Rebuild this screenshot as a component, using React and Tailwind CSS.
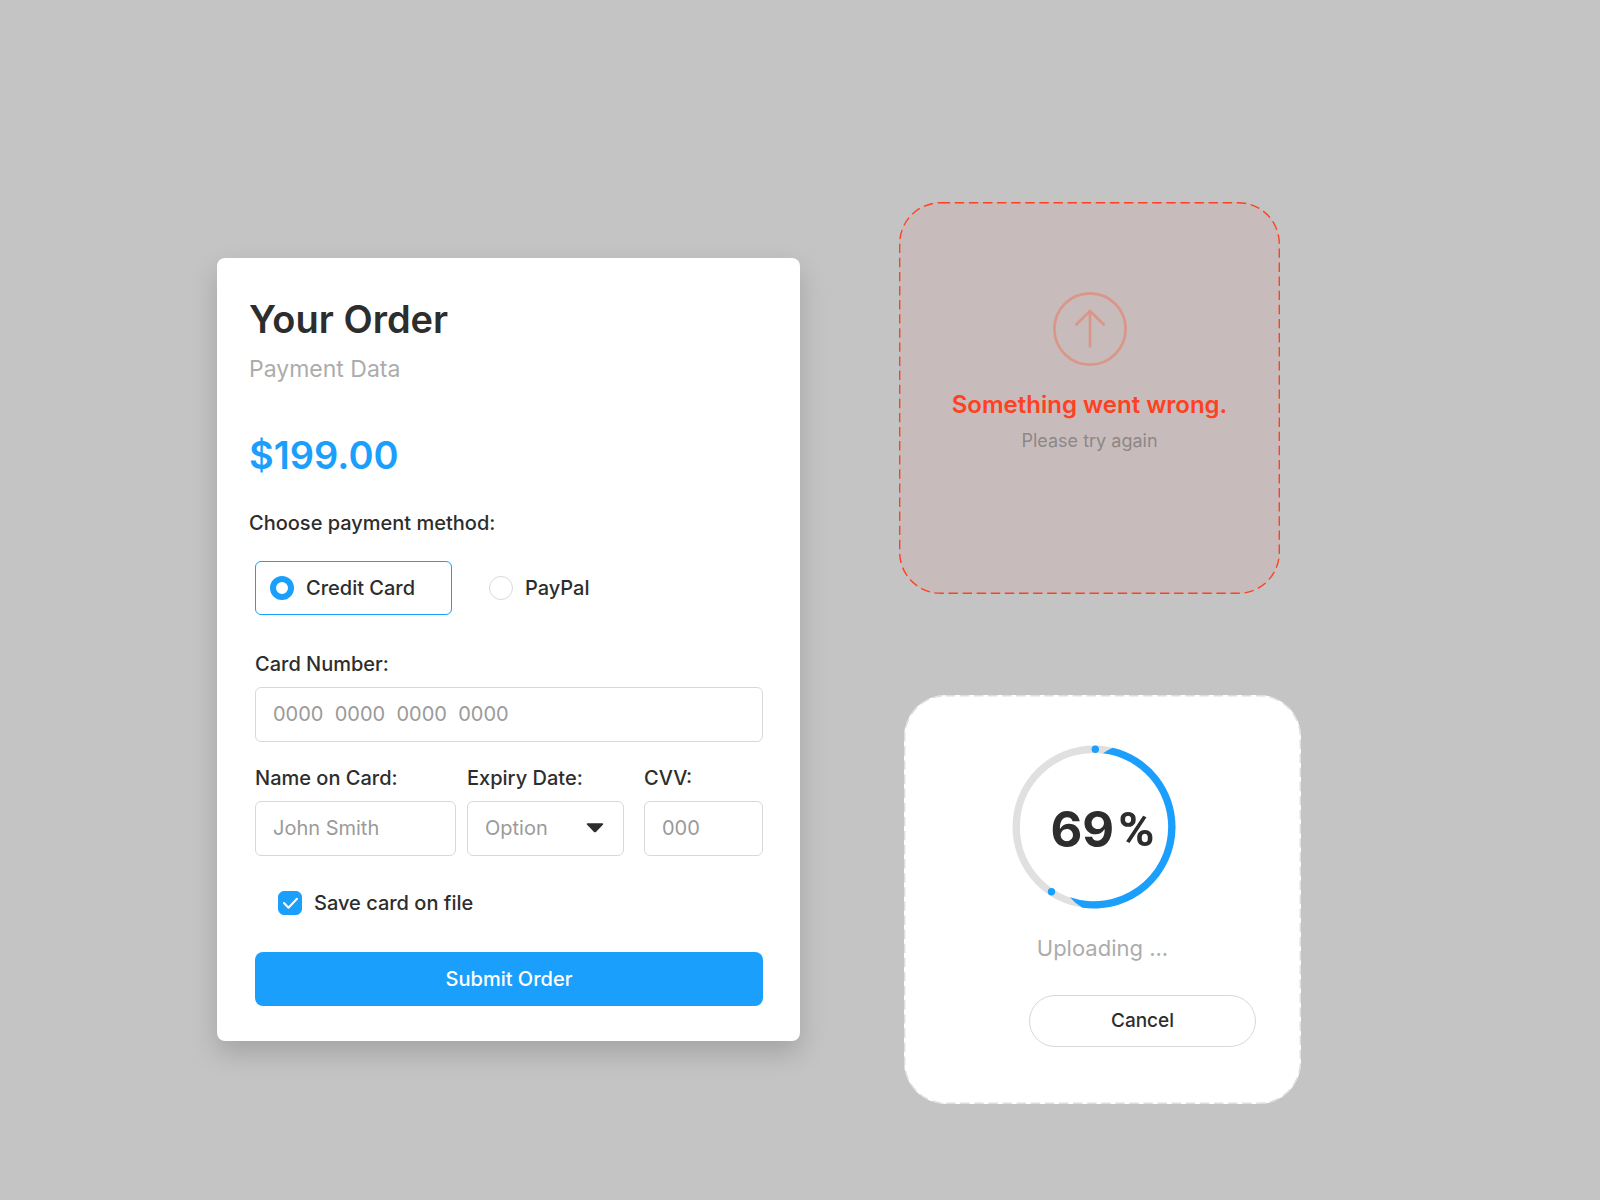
const labelText = 'text-xl leading-7 font-medium text-[#2d2d2d]';
const fieldBox =
  'h-[55px] w-full min-w-0 rounded-md border border-[#d8d8d8] bg-white px-[17px] pb-0.5 text-xl outline-none placeholder:text-[#9a9a9a] focus:border-[#1b9ffd]';
const radioDot =
  'size-6 shrink-0 appearance-none rounded-full border border-[#d8d8d8] bg-white checked:border-6 checked:border-[#1b9ffd]';

const Field = ({ id, label, className, children }) => (
  <div className={className}>
    <label htmlFor={id} className={`block ${labelText}`}>
      {label}
    </label>
    <div className="relative mt-[9px]">{children}</div>
  </div>
);

const OrderForm = () => (
  <form
    onSubmit={(e) => e.preventDefault()}
    className="mt-14 rounded-lg bg-white pt-[37px] pr-[37px] pb-[35px] pl-8 shadow-[0_12px_27px_rgba(0,0,0,0.17)]"
  >
    <h1 className="text-[38px] leading-12 font-semibold text-[#2d2d2d]">Your Order</h1>
    <p className="mt-3 text-[23px] leading-7 text-[#acacac]">Payment Data</p>
    <p className="mt-12 text-[38px] leading-12 font-semibold text-[#1b9ffd]">$199.00</p>

    <fieldset>
      <legend className={`pt-[30px] ${labelText}`}>Choose payment method:</legend>
      <div className="mt-6 flex pl-1.5">
        <label
          className={`flex h-[54px] w-[197px] items-center gap-3 rounded-md border border-[#1b9ffd] pl-3.5 ${labelText}`}
        >
          <input type="radio" name="method" defaultChecked className={radioDot} />
          Credit Card
        </label>
        <label className={`ml-[37px] flex h-[54px] items-center gap-3 ${labelText}`}>
          <input type="radio" name="method" className={radioDot} />
          PayPal
        </label>
      </div>
    </fieldset>

    <div className="pl-1.5">
      <Field id="card-number" label="Card Number:" className="mt-[35px]">
        <input id="card-number" placeholder="0000  0000  0000  0000" className={fieldBox} />
      </Field>

      <div className="mt-[22px] flex">
        <Field id="card-name" label="Name on Card:" className="min-w-0 flex-1">
          <input id="card-name" placeholder="John Smith" className={fieldBox} />
        </Field>
        <Field id="expiry" label="Expiry Date:" className="ml-[11px] w-[157px] shrink-0">
          <select id="expiry" className={`block appearance-none text-[#9a9a9a] ${fieldBox}`}>
            <option>Option</option>
          </select>
          <svg
            viewBox="0 0 18 10"
            className="pointer-events-none absolute top-[22px] right-5 h-2.5 w-[18px]"
            fill="#2d2d2d"
          >
            <path d="M1.6 0.2h14.8c.9 0 1.2 1 .5 1.600L10.200 8.800a1.800 1.800 0 0 1-2.400 0L1.100 1.800C.4 1.200.7.2 1.600.2Z" />
          </svg>
        </Field>
        <Field id="cvv" label="CVV:" className="ml-5 w-[119px] shrink-0">
          <input id="cvv" placeholder="000" className={fieldBox} />
        </Field>
      </div>

      <label className={`mt-[33px] ml-[23px] flex w-fit items-center gap-3 ${labelText}`}>
        <span className="relative size-6">
          <input
            type="checkbox"
            defaultChecked
            className="peer block size-6 appearance-none rounded-md border border-[#d8d8d8] checked:border-[#1b9ffd] checked:bg-[#1b9ffd]"
          />
          <svg
            viewBox="0 0 24 24"
            className="pointer-events-none absolute inset-0 hidden size-6 peer-checked:block"
            fill="none"
            stroke="#fff"
            strokeWidth="2"
            strokeLinecap="round"
            strokeLinejoin="round"
          >
            <path d="M6 12l4.500 4.700L19 7.800" />
          </svg>
        </span>
        Save card on file
      </label>

      <button
        type="submit"
        className="mt-[35px] block h-[54px] w-full rounded-lg bg-[#1b9ffd] text-xl font-medium text-white"
      >
        Submit Order
      </button>
    </div>
  </form>
);

const ErrorPanel = () => (
  <section className="relative flex h-[392px] w-[381px] max-w-full flex-col items-center rounded-[42px] bg-[#c7bcbb] pt-[90px] text-center">
    <svg className="pointer-events-none absolute inset-0 size-full" fill="none">
      <rect
        x="0.7"
        y="0.7"
        rx="41"
        className="h-[calc(100%-1.400px)] w-[calc(100%-1.400px)]"
        stroke="#fe4122"
        strokeWidth="1.4"
        strokeDasharray="9.4 4.7"
      />
    </svg>
    <svg
      viewBox="0 0 74 74"
      className="size-[74px]"
      fill="none"
      stroke="#db968a"
      strokeWidth="2.700"
      strokeLinecap="round"
      strokeLinejoin="round"
    >
      <circle cx="37" cy="37" r="35.600" />
      <path d="M37 54.500V19M23.300 32.500L37 19l13.700 13.500" />
    </svg>
    <h2 className="mt-[23px] text-2xl leading-8 font-semibold text-[#fe4122]">Something went wrong.</h2>
    <p className="mt-2 text-lg leading-6 text-[#8d8787]">Please try again</p>
  </section>
);

const UploadPanel = () => (
  <section className="relative flex w-[397px] max-w-full flex-col justify-self-end rounded-[42px] bg-white pt-[50px] pb-[57px]">
    <svg className="pointer-events-none absolute inset-0 size-full" fill="none">
      <rect
        x="0.7"
        y="0.7"
        rx="41"
        className="h-[calc(100%-1.400px)] w-[calc(100%-1.400px)]"
        stroke="#dedede"
        strokeWidth="1.4"
        strokeDasharray="9.4 4.7"
      />
    </svg>
    <div className="relative">
      <div className="pr-[17px]">
        <svg viewBox="0 0 164 164" className="mx-auto size-[164px]">
          <circle cx="82" cy="82" r="77.800" fill="none" stroke="#e0e0e0" strokeWidth="7.400" />
          <path
            d="M100.700 2.700A81.500 81.500 0 0 1 163.500 82A81.500 81.500 0 0 1 70.500 162.700Q63 158.500 58 152.200A74.200 74.200 0 0 0 156.200 82A74.200 74.200 0 0 0 91 8.300Q95.500 5 100.700 2.700Z"
            fill="#1b9ffd"
          />
          <circle cx="83.300" cy="4.200" r="3.700" fill="#1b9ffd" />
          <circle cx="39.500" cy="146.800" r="3.700" fill="#1b9ffd" />
        </svg>
      </div>
      <strong className="absolute inset-0 flex items-center justify-center gap-1 pt-1.5 text-[49px] font-bold text-[#2d2d2d]">
        69<span className="font-['Roboto',sans-serif]">%</span>
      </strong>
    </div>
    <p className="mt-[25px] text-center text-[22px] leading-7 text-[#acacac]">Uploading ...</p>
    <button
      type="button"
      className="mt-[33px] mr-[45px] h-[52px] w-[227px] self-end rounded-full border border-[#d8d8d8] bg-white text-[19px] font-medium text-[#2d2d2d]"
    >
      Cancel
    </button>
  </section>
);

const App = () => (
  <main className="min-h-screen bg-[#c4c4c4] pt-[202px] pb-24 pl-[217px] font-['Inter',sans-serif]">
    <div className="grid grid-cols-[minmax(0,583px)_minmax(0,402px)] items-start gap-[99px]">
      <OrderForm />
      <div className="grid gap-[101px]">
        <ErrorPanel />
        <UploadPanel />
      </div>
    </div>
  </main>
);

export default App;
